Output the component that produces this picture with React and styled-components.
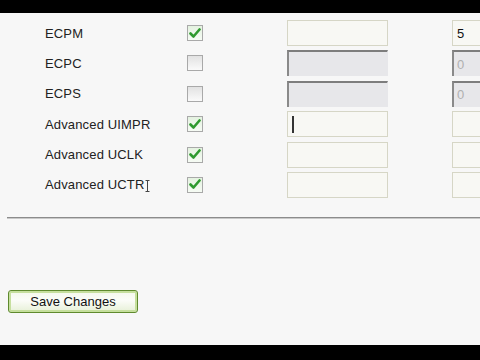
import React from "react";
import styled, { createGlobalStyle } from "styled-components";

const Global = createGlobalStyle`
  html, body { margin: 0; padding: 0; background: #000; }
  body { font-family: "Liberation Sans", Arial, sans-serif; }
`;

const Frame = styled.div`
  width: 480px;
  height: 360px;
  background: #000;
  padding: 13px 0 15px;
  box-sizing: border-box;
  display: flex;
  flex-direction: column;
`;

const Content = styled.div`
  flex: 1;
  background: #f7f7f7;
  overflow: hidden;
  padding-top: 7px;
  display: flex;
  flex-direction: column;
`;

const Grid = styled.div`
  display: grid;
  grid-template-columns: 142px 100px 165px 120px;
  grid-auto-rows: 30.4px;
  padding-left: 45px;
  width: 572px;
`;

const Label = styled.div`
  font-size: 13px;
  letter-spacing: 0.15px;
  color: #222;
  display: flex;
  align-items: center;
  height: 26px;
  white-space: nowrap;
`;

const Box = styled.div`
  width: 16px;
  height: 16px;
  margin-top: 5px;
  box-sizing: border-box;
  border: 1px solid #a9a9a9;
  background: ${p => (p.$checked ? "linear-gradient(#e4f2e0, #f6fbf4)" : "linear-gradient(#e2e2e2, #fafafa)")};
  display: flex;
  align-items: center;
  justify-content: center;
`;

const FieldWrap = styled.div`
  position: relative;
  width: ${p => p.$w}px;
  height: 26px;
`;

const Field = styled.input`
  width: 100%;
  height: 100%;
  box-sizing: border-box;
  margin: 0;
  font-family: "Liberation Sans", Arial, sans-serif;
  font-size: 13px;
  padding: 0 4px;
  outline: none;
  ${p =>
    p.disabled
      ? `
    background: #e7e7ea;
    color: #b0b0b0;
    border: none;
    border-top: 2px solid #7d7d7d;
    border-left: 2px solid #8a8a8a;
    border-right: 1px solid #e7e7ea;
    padding-left: 3px;
  `
      : `
    background: #f8f8f4;
    color: #111;
    border: 1px solid #d6d6c6;
  `}
`;

const Caret = styled.span`
  position: absolute;
  left: 5px;
  top: 5px;
  width: 2px;
  height: 17px;
  background: #333;
`;

const Separator = styled.hr`
  margin: 15px 0 0 7px;
  border: none;
  border-top: 1px solid #8c8c8c;
  border-bottom: 1px solid #c9c9c9;
  height: 0;
`;

const ButtonRow = styled.div`
  padding: 71px 0 0 8px;
`;

const SaveButton = styled.button`
  width: 130px;
  height: 23px;
  box-sizing: border-box;
  border: 1px solid #5f8a2e;
  border-radius: 3px;
  background: linear-gradient(#f4f8ec, #fbfcf8 45%, #e6f0d6);
  box-shadow: inset 0 0 0 2px #c6df9e;
  font-family: "Liberation Sans", Arial, sans-serif;
  font-size: 13px;
  color: #111;
  padding: 0;
  cursor: pointer;
`;

const Check = () => (
  <svg width="12" height="11" viewBox="0 0 12 11">
    <path d="M1.5 5.5 L4.5 8.5 L10.5 1.5" fill="none" stroke="#2f9a2f" strokeWidth="2.6" strokeLinecap="round" strokeLinejoin="round" />
  </svg>
);

const IBeam = () => (
  <svg width="5" height="12" viewBox="0 0 5 12" style={{ marginLeft: 0, marginTop: 2 }}>
    <path d="M0.5 0.5h4M2.5 0.5v11M0.5 11.5h4" stroke="#444" strokeWidth="1" fill="none" />
  </svg>
);

const rows = [
  { label: "ECPM", checked: true, disabled: false, v2: "5" },
  { label: "ECPC", checked: false, disabled: true, v2: "0" },
  { label: "ECPS", checked: false, disabled: true, v2: "0" },
  { label: "Advanced UIMPR", checked: true, disabled: false, v2: "", caret: true },
  { label: "Advanced UCLK", checked: true, disabled: false, v2: "" },
  { label: "Advanced UCTR", checked: true, disabled: false, v2: "", ibeam: true },
];

export default function App() {
  return (
    <>
      <Global />
      <Frame>
        <Content>
          <Grid>
            {rows.map(r => (
              <React.Fragment key={r.label}>
                <Label>
                  {r.label}
                  {r.ibeam && <IBeam />}
                </Label>
                <div>
                  <Box $checked={r.checked}>{r.checked && <Check />}</Box>
                </div>
                <FieldWrap $w={101}>
                  <Field disabled={r.disabled} readOnly value="" />
                  {r.caret && <Caret />}
                </FieldWrap>
                <FieldWrap $w={101}>
                  <Field disabled={r.disabled} readOnly value={r.v2} />
                </FieldWrap>
              </React.Fragment>
            ))}
          </Grid>
          <Separator />
          <ButtonRow>
            <SaveButton>Save Changes</SaveButton>
          </ButtonRow>
        </Content>
      </Frame>
    </>
  );
}
